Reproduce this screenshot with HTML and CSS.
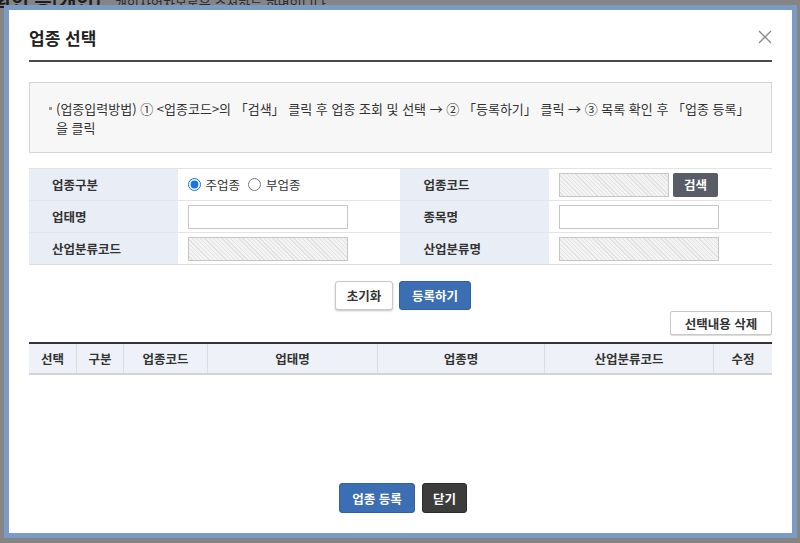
FILE: index.html
```html
<!DOCTYPE html>
<html lang="ko">
<head>
<meta charset="utf-8">
<title>업종 선택</title>
<link rel="stylesheet" href="styles.css">
</head>
<body>
<div class="backdrop">
  <div class="bg-title"><b>확인 등(개인)</b><span>개인사업자목록을 수정하는 화면입니다.</span></div>
</div>
<div class="modal">
  <div class="modal-head">
    <h2 class="modal-title">업종 선택</h2>
    <button class="close" type="button" aria-label="닫기">
      <svg width="14" height="14" viewBox="0 0 14 14"><path d="M1 1 L13 13 M13 1 L1 13" stroke="#8a8a8a" stroke-width="1.3" fill="none"/></svg>
    </button>
  </div>

  <div class="guide">
    <p class="guide-text">(업종입력방법) ① &lt;업종코드&gt;의 「검색」 클릭 후 업종 조회 및 선택 → ② 「등록하기」 클릭 → ③ 목록 확인 후 「업종 등록」<br>을 클릭</p>
  </div>

  <div class="form-grid">
    <div class="lbl">업종구분</div>
    <div class="val">
      <label class="radio"><input type="radio" name="kind" checked> 주업종</label>
      <label class="radio"><input type="radio" name="kind"> 부업종</label>
    </div>
    <div class="lbl">업종코드</div>
    <div class="val"><input class="inp hatch short" type="text" disabled><button class="btn-search" type="button">검색</button></div>

    <div class="lbl">업태명</div>
    <div class="val"><input class="inp" type="text"></div>
    <div class="lbl">종목명</div>
    <div class="val"><input class="inp" type="text"></div>

    <div class="lbl last">산업분류코드</div>
    <div class="val last"><input class="inp hatch" type="text" disabled></div>
    <div class="lbl last">산업분류명</div>
    <div class="val last"><input class="inp hatch" type="text" disabled></div>
  </div>

  <div class="actions">
    <button class="btn btn-white" type="button">초기화</button>
    <button class="btn btn-blue" type="button">등록하기</button>
  </div>

  <div class="list-tools">
    <button class="btn-del" type="button">선택내용 삭제</button>
  </div>

  <div class="list-head">
    <div class="th">선택</div>
    <div class="th">구분</div>
    <div class="th">업종코드</div>
    <div class="th">업태명</div>
    <div class="th">업종명</div>
    <div class="th">산업분류코드</div>
    <div class="th">수정</div>
  </div>

  <div class="footer">
    <button class="btn btn-blue wide" type="button">업종 등록</button>
    <button class="btn btn-dark" type="button">닫기</button>
  </div>
</div>
</body>
</html>
```
FILE: styles.css
```css
* { box-sizing: border-box; }
html, body {
  margin: 0;
  padding: 0;
}
body {
  width: 800px;
  height: 543px;
  overflow: hidden;
  position: relative;
  background: #858585;
  font-family: "Noto Sans CJK KR", "Noto Sans", sans-serif;
  color: #333;
}
.backdrop {
  position: absolute;
  inset: 0;
}
.bg-title {
  position: absolute;
  left: -6px;
  top: -13px;
  display: flex;
  align-items: baseline;
  gap: 14px;
  color: #1e1e1e;
  white-space: nowrap;
}
.bg-title b { font-size: 19px; }
.bg-title span { font-size: 13px; color: #2a2a2a; }

.modal {
  position: absolute;
  left: 4px;
  top: 5px;
  width: 793px;
  height: 533px;
  border: 5px solid #7b9bc5;
  background: #fff;
  padding: 0 20px 20px 20px;
  display: flex;
  flex-direction: column;
}
.modal-head {
  display: flex;
  justify-content: space-between;
  align-items: flex-start;
  padding: 14px 0 8px 0;
  border-bottom: 2px solid #4a4a4a;
}
.modal-title {
  margin: 0;
  font-size: 17px;
  line-height: 28px;
  font-weight: 700;
  color: #222;
}
.close {
  border: 0;
  background: none;
  padding: 0;
  margin: 6px 0 0 0;
  width: 14px;
  height: 14px;
  display: block;
  line-height: 0;
}

.guide {
  margin-top: 20px;
  border: 1px solid #d6d6d6;
  background: #f7f7f7;
  padding: 16px 8px 15px 26px;
}
.guide-text {
  margin: 0;
  position: relative;
  font-size: 13px;
  line-height: 19px;
  color: #333;
}
.guide-text::before {
  content: "";
  position: absolute;
  left: -7px;
  top: 8px;
  width: 3px;
  height: 3px;
  background: #9a9a9a;
}

.form-grid {
  margin-top: 15px;
  display: grid;
  grid-template-columns: 20% 30% 20% 30%;
  border-top: 1px solid #dfe3ea;
}
.lbl, .val {
  height: 32px;
  display: flex;
  align-items: center;
  border-bottom: 1px solid #e4e4e4;
  font-size: 12.5px;
}
.lbl {
  background: #e9edf5;
  padding-left: 23px;
  font-weight: 700;
  color: #333;
}
.val {
  padding-left: 10px;
  gap: 4px;
}
.val.last, .lbl.last { border-bottom-color: #dcdcdc; }
.radio {
  display: inline-flex;
  align-items: center;
  gap: 5px;
  margin-right: 4px;
  color: #333;
}
.radio input {
  margin: 0;
  width: 13px;
  height: 13px;
  accent-color: #1a73e8;
}
.inp {
  width: 160px;
  height: 24px;
  border: 1px solid #c6c6c6;
  background: #fff;
  margin: 0;
  padding: 0 4px;
  font: inherit;
}
.inp.short { width: 110px; }
.hatch {
  background: repeating-linear-gradient(45deg, #f3f3f3 0 2px, #e3e3e3 2px 3px);
}
.btn-search {
  height: 24px;
  width: 45px;
  border: 0;
  border-radius: 2px;
  background: #575c66;
  color: #fff;
  font: 700 12.5px "Noto Sans CJK KR", sans-serif;
  padding: 0;
}

.actions {
  margin-top: 16px;
  display: flex;
  justify-content: center;
  gap: 6px;
  padding-left: 5px;
}
.btn {
  height: 29px;
  border-radius: 3px;
  font: 700 12.5px "Noto Sans CJK KR", sans-serif;
  padding: 0 10px;
  line-height: 27px;
  cursor: pointer;
}
.btn-white {
  background: #fff;
  color: #333;
  border: 1px solid #c9c9c9;
  box-shadow: 0 1px 2px rgba(0,0,0,0.25);
  width: 58px;
  padding: 0;
}
.btn-blue {
  background: #3b6eb3;
  color: #fff;
  border: 1px solid #34629f;
  width: 72px;
  padding: 0;
}
.btn-blue.wide { width: 76px; height: 30px; }
.btn-dark {
  background: #3c3c3c;
  color: #fff;
  border: 1px solid #2c2c2c;
  width: 45px;
  height: 30px;
  padding: 0;
}

.list-tools {
  margin-top: 1px;
  display: flex;
  justify-content: flex-end;
}
.btn-del {
  width: 102px;
  height: 24px;
  border: 1px solid #c9c9c9;
  background: #fff;
  color: #333;
  border-radius: 2px;
  box-shadow: 0 1px 1px rgba(0,0,0,0.15);
  font: 700 12.5px "Noto Sans CJK KR", sans-serif;
  padding: 0;
}

.list-head {
  margin-top: 7px;
  display: grid;
  grid-template-columns: 47px 47px 84px 170px 167px 169px 1fr;
  border-top: 2px solid #333;
  border-bottom: 2px solid #cfd3da;
  background: #eef1f7;
}
.th {
  height: 29px;
  display: flex;
  align-items: center;
  justify-content: center;
  font-size: 12.5px;
  font-weight: 700;
  color: #333;
  border-left: 1px solid #d9dde5;
}
.th:first-child { border-left: 0; }

.footer {
  margin-top: auto;
  display: flex;
  justify-content: center;
  gap: 7px;
  padding-left: 5px;
}
```
